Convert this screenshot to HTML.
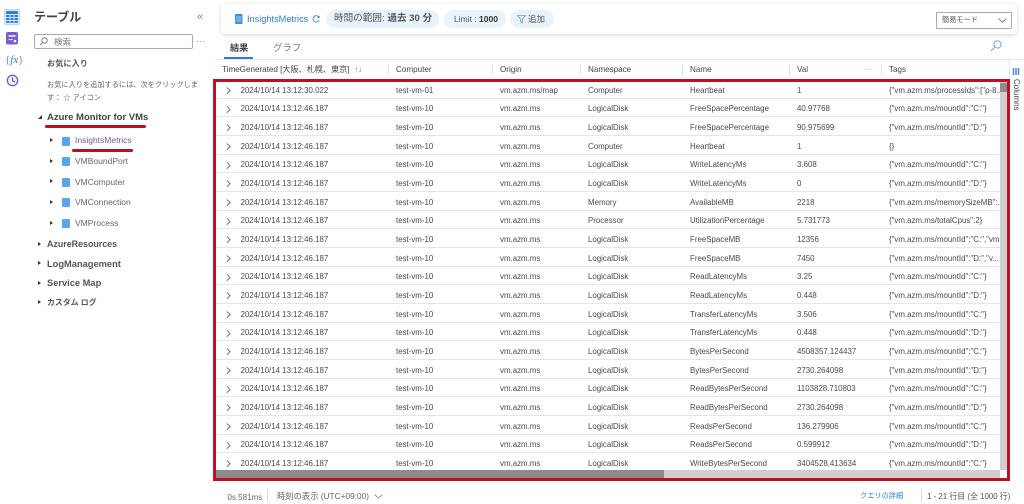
<!DOCTYPE html>
<html lang="ja"><head><meta charset="utf-8"><style>
html,body{margin:0;padding:0;background:#fff}
body{width:1024px;height:504px;position:relative;overflow:hidden;font-family:"Liberation Sans","Noto Sans CJK JP",sans-serif;font-size:8.5px;color:#444}
.a{position:absolute;white-space:nowrap}
svg{position:absolute;overflow:visible}
.row{position:absolute;left:216px;width:784px;height:18.67px;border-bottom:1px solid #e6e6e6;box-sizing:border-box;font-size:7.9px}
.row span{position:absolute;top:4.6px;white-space:nowrap;line-height:12px;color:#4a4a4a}
.row i{position:absolute;left:8.5px;top:8px;width:3.5px;height:3.5px;border-top:1px solid #777;border-right:1px solid #777;transform:rotate(45deg)}
.t0{left:24.5px}.t1{left:180px}.t2{left:284px}.t3{left:372px}.t4{left:474px}.t5{left:581px}.t6{left:673px;width:111px;overflow:hidden}
.h{top:64px;line-height:12px;color:#444;font-size:8.1px}
.sep{position:absolute;top:64px;width:1px;height:11px;background:#e3e3e3}
.item{color:#666;font-size:8.5px}
.bold{font-weight:bold;color:#444;font-size:9.5px}
.tri{position:absolute;width:0;height:0;border-left:3px solid #333;border-top:2.5px solid transparent;border-bottom:2.5px solid transparent}
.ti{position:absolute;left:62px;width:8px;height:9px;background:#5ba6ea;border-radius:1px}
.pill{position:absolute;top:10px;height:18px;background:#e9f3fb;border-radius:9px;line-height:18px;white-space:nowrap;color:#555}
</style></head><body>

<!-- left rail -->
<div class="a" style="left:4px;top:9px;width:16px;height:16px;background:#dcecf9;border:1px solid #b9d8f2;border-radius:2px;box-sizing:border-box"></div>
<svg style="left:6px;top:11px" width="12" height="12"><rect width="12" height="12" rx="1" fill="#2f80cf"/><path d="M0 3.5H12M0 6.5H12M0 9.5H12M4 3.5V12M8 3.5V12" stroke="#d8e9f8" stroke-width=".9"/></svg>
<svg style="left:6px;top:32px" width="12" height="13"><rect width="12" height="12.5" rx="2" fill="#7a5bd0"/><path d="M2.5 4H9.5" stroke="#fff" stroke-width="1.4"/><path d="M2.5 7.5H7" stroke="#d9cff4" stroke-width="1.2"/><circle cx="9" cy="9" r="1.3" fill="#fff"/></svg>
<div class="a" style="left:5px;top:53px;font-size:11px;color:#888;font-family:'Liberation Serif',serif;line-height:14px">{<span style="color:#2d7fc5;font-style:italic">fx</span>}</div>
<svg style="left:6px;top:74px" width="13" height="13" viewBox="0 0 13 13"><circle cx="6.5" cy="6.5" r="5.2" fill="#f1ecfb" stroke="#7a5bd0" stroke-width="1.3"/><path d="M6.5 3.5V6.8L9 8" fill="none" stroke="#555" stroke-width="1"/></svg>

<!-- sidebar -->
<div class="a" style="left:34px;top:7px;font-size:12px;font-weight:bold;color:#444;line-height:20px">テーブル</div>
<div class="a" style="left:197px;top:11px;font-size:11px;color:#5b8fd0;line-height:12px">«</div>
<div class="a" style="left:34px;top:34px;width:159px;height:15px;border:1px solid #aaa;border-radius:2px;box-sizing:border-box"></div>
<svg style="left:39px;top:37px" width="9" height="9"><circle cx="5.5" cy="3.5" r="2.7" fill="none" stroke="#666" stroke-width=".8"/><path d="M3.5 5.5L.8 8.2" stroke="#666" stroke-width=".8"/></svg>
<div class="a" style="left:54px;top:36px;color:#777;line-height:12px">検索</div>
<div class="a" style="left:196px;top:35px;color:#777;line-height:12px;letter-spacing:.5px">···</div>
<div class="a" style="left:47px;top:58px;font-weight:bold;color:#555;line-height:12px;font-size:8.2px">お気に入り</div>
<div class="a" style="left:47px;top:77.5px;color:#666;line-height:13px;font-size:7.2px">お気に入りを追加するには、次をクリックしま<br>す： ☆ アイコン</div>
<div class="a" style="left:38px;top:115px;width:0;height:0;border-bottom:4px solid #333;border-left:4px solid transparent"></div>
<div class="a bold" style="left:47px;top:111px;line-height:13px">Azure Monitor for VMs</div>
<div class="a" style="left:45px;top:125px;width:101px;height:2.5px;background:#b8101f;border-radius:2px"></div>

<div class="tri" style="left:50px;top:138px"></div><div class="ti" style="top:136.5px"></div><div class="a item" style="left:75px;top:134px;line-height:13px;color:#7a5a86">InsightsMetrics</div>
<div class="a" style="left:72px;top:149px;width:61px;height:2.5px;background:#b8101f;border-radius:2px"></div>
<div class="tri" style="left:50px;top:159px"></div><div class="ti" style="top:157px"></div><div class="a item" style="left:75px;top:155px;line-height:13px">VMBoundPort</div>
<div class="tri" style="left:50px;top:179px"></div><div class="ti" style="top:177.5px"></div><div class="a item" style="left:75px;top:175.5px;line-height:13px">VMComputer</div>
<div class="tri" style="left:50px;top:200px"></div><div class="ti" style="top:198px"></div><div class="a item" style="left:75px;top:196px;line-height:13px">VMConnection</div>
<div class="tri" style="left:50px;top:221px"></div><div class="ti" style="top:219px"></div><div class="a item" style="left:75px;top:217px;line-height:13px">VMProcess</div>

<div class="tri" style="left:38px;top:242px"></div><div class="a bold" style="left:47px;top:238px;line-height:13px;color:#555;font-size:8.9px">AzureResources</div>
<div class="tri" style="left:38px;top:261px"></div><div class="a bold" style="left:47px;top:257.5px;line-height:13px;color:#555;font-size:9.3px">LogManagement</div>
<div class="tri" style="left:38px;top:281px"></div><div class="a bold" style="left:47px;top:277px;line-height:13px;color:#555;font-size:9.3px">Service Map</div>
<div class="tri" style="left:38px;top:300px"></div><div class="a bold" style="left:47px;top:296px;line-height:13px;color:#555;font-size:7.9px">カスタム ログ</div>

<!-- top bar -->
<div class="a" style="left:221px;top:4px;width:796px;height:30px;background:#fff;border-radius:4px;box-shadow:0 1px 5px rgba(0,0,0,.16)"></div>
<svg style="left:235px;top:14px" width="8" height="10"><rect width="7.5" height="10" rx="1" fill="#3d8fdc"/><path d="M1 3H6.5M1 5H6.5M1 7H6.5" stroke="#cfe4f7" stroke-width=".7"/></svg>
<div class="a" style="left:247px;top:13px;color:#2f7fc9;line-height:13px;font-size:9.2px">InsightsMetrics</div>
<svg style="left:312px;top:15px" width="8" height="8"><path d="M6.8 2A3.2 3.2 0 1 0 7.2 5" fill="none" stroke="#2f7fc9" stroke-width=".8"/><path d="M7.5 .5V3H5" fill="#2f7fc9"/></svg>
<div class="pill" style="left:326px;width:113px;padding-left:8px;box-sizing:border-box;font-size:9.6px">時間の範囲: <b>過去 30 分</b></div>
<div class="pill" style="left:444px;width:62px;padding-left:10px;box-sizing:border-box">Limit : <b style="color:#333">1000</b></div>
<div class="pill" style="left:510px;width:44px;padding-left:18px;box-sizing:border-box">追加</div>
<svg style="left:517px;top:15px" width="9" height="9"><path d="M.5 .5H8.5L5.3 4.2V8L3.7 7V4.2Z" fill="none" stroke="#6a9ed2" stroke-width=".8"/></svg>
<div class="a" style="left:936px;top:11.5px;width:76px;height:17px;border:1px solid #aaa;border-radius:1px;box-sizing:border-box"></div>
<div class="a" style="left:942px;top:14px;line-height:12px;color:#555;font-size:7.2px">簡易モード</div>
<svg style="left:998px;top:18px" width="9" height="5"><path d="M.5 .5L4.5 4.2L8.5 .5" fill="none" stroke="#666" stroke-width=".8"/></svg>

<!-- tabs -->
<div class="a" style="left:230px;top:40.5px;font-size:9.2px;font-weight:bold;color:#444;line-height:14px">結果</div>
<div class="a" style="left:273px;top:40.5px;font-size:9.4px;color:#777;line-height:14px">グラフ</div>
<div class="a" style="left:224px;top:56.5px;width:29px;height:2px;background:#2f80cf"></div>
<svg style="left:990px;top:40px" width="12" height="12"><circle cx="7.5" cy="4.5" r="3.6" fill="none" stroke="#6aa5e0" stroke-width="1"/><path d="M5 7L1 11" stroke="#6aa5e0" stroke-width="1"/></svg>
<div class="a" style="left:215px;top:58.5px;width:809px;height:1px;background:#e6e6e6"></div>

<!-- header -->
<div class="a h" style="left:222px">TimeGenerated [大阪、札幌、東京]&nbsp; <span style="color:#777">↑↓</span></div>
<div class="a h" style="left:396px">Computer</div>
<div class="a h" style="left:500px">Origin</div>
<div class="a h" style="left:588px">Namespace</div>
<div class="a h" style="left:690px">Name</div>
<div class="a h" style="left:797px">Val</div>
<div class="a h" style="left:864px;color:#8aa8c8">···</div>
<div class="a h" style="left:889px">Tags</div>
<div class="sep" style="left:388px"></div><div class="sep" style="left:492px"></div><div class="sep" style="left:580px"></div><div class="sep" style="left:682px"></div><div class="sep" style="left:789px"></div><div class="sep" style="left:881px"></div>
<div class="a" style="left:1009px;top:58px;width:1px;height:422px;background:#e6e6e6"></div>

<!-- rows -->
<div class="row" style="top:80px"><i></i><span class="t0">2024/10/14 13:12:30.022</span><span class="t1">test-vm-01</span><span class="t2">vm.azm.ms/map</span><span class="t3">Computer</span><span class="t4">Heartbeat</span><span class="t5">1</span><span class="t6">{"vm.azm.ms/processIds":["p-8...</span></div>
<div class="row" style="top:98.67px"><i></i><span class="t0">2024/10/14 13:12:46.187</span><span class="t1">test-vm-10</span><span class="t2">vm.azm.ms</span><span class="t3">LogicalDisk</span><span class="t4">FreeSpacePercentage</span><span class="t5">40.97768</span><span class="t6">{"vm.azm.ms/mountId":"C:"}</span></div>
<div class="row" style="top:117.33px"><i></i><span class="t0">2024/10/14 13:12:46.187</span><span class="t1">test-vm-10</span><span class="t2">vm.azm.ms</span><span class="t3">LogicalDisk</span><span class="t4">FreeSpacePercentage</span><span class="t5">90.975699</span><span class="t6">{"vm.azm.ms/mountId":"D:"}</span></div>
<div class="row" style="top:136px"><i></i><span class="t0">2024/10/14 13:12:46.187</span><span class="t1">test-vm-10</span><span class="t2">vm.azm.ms</span><span class="t3">Computer</span><span class="t4">Heartbeat</span><span class="t5">1</span><span class="t6">{}</span></div>
<div class="row" style="top:154.67px"><i></i><span class="t0">2024/10/14 13:12:46.187</span><span class="t1">test-vm-10</span><span class="t2">vm.azm.ms</span><span class="t3">LogicalDisk</span><span class="t4">WriteLatencyMs</span><span class="t5">3.608</span><span class="t6">{"vm.azm.ms/mountId":"C:"}</span></div>
<div class="row" style="top:173.33px"><i></i><span class="t0">2024/10/14 13:12:46.187</span><span class="t1">test-vm-10</span><span class="t2">vm.azm.ms</span><span class="t3">LogicalDisk</span><span class="t4">WriteLatencyMs</span><span class="t5">0</span><span class="t6">{"vm.azm.ms/mountId":"D:"}</span></div>
<div class="row" style="top:192px"><i></i><span class="t0">2024/10/14 13:12:46.187</span><span class="t1">test-vm-10</span><span class="t2">vm.azm.ms</span><span class="t3">Memory</span><span class="t4">AvailableMB</span><span class="t5">2218</span><span class="t6">{"vm.azm.ms/memorySizeMB":...</span></div>
<div class="row" style="top:210.67px"><i></i><span class="t0">2024/10/14 13:12:46.187</span><span class="t1">test-vm-10</span><span class="t2">vm.azm.ms</span><span class="t3">Processor</span><span class="t4">UtilizationPercentage</span><span class="t5">5.731773</span><span class="t6">{"vm.azm.ms/totalCpus":2}</span></div>
<div class="row" style="top:229.33px"><i></i><span class="t0">2024/10/14 13:12:46.187</span><span class="t1">test-vm-10</span><span class="t2">vm.azm.ms</span><span class="t3">LogicalDisk</span><span class="t4">FreeSpaceMB</span><span class="t5">12356</span><span class="t6">{"vm.azm.ms/mountId":"C:","vm...</span></div>
<div class="row" style="top:248px"><i></i><span class="t0">2024/10/14 13:12:46.187</span><span class="t1">test-vm-10</span><span class="t2">vm.azm.ms</span><span class="t3">LogicalDisk</span><span class="t4">FreeSpaceMB</span><span class="t5">7450</span><span class="t6">{"vm.azm.ms/mountId":"D:","v...</span></div>
<div class="row" style="top:266.67px"><i></i><span class="t0">2024/10/14 13:12:46.187</span><span class="t1">test-vm-10</span><span class="t2">vm.azm.ms</span><span class="t3">LogicalDisk</span><span class="t4">ReadLatencyMs</span><span class="t5">3.25</span><span class="t6">{"vm.azm.ms/mountId":"C:"}</span></div>
<div class="row" style="top:285.33px"><i></i><span class="t0">2024/10/14 13:12:46.187</span><span class="t1">test-vm-10</span><span class="t2">vm.azm.ms</span><span class="t3">LogicalDisk</span><span class="t4">ReadLatencyMs</span><span class="t5">0.448</span><span class="t6">{"vm.azm.ms/mountId":"D:"}</span></div>
<div class="row" style="top:304px"><i></i><span class="t0">2024/10/14 13:12:46.187</span><span class="t1">test-vm-10</span><span class="t2">vm.azm.ms</span><span class="t3">LogicalDisk</span><span class="t4">TransferLatencyMs</span><span class="t5">3.506</span><span class="t6">{"vm.azm.ms/mountId":"C:"}</span></div>
<div class="row" style="top:322.67px"><i></i><span class="t0">2024/10/14 13:12:46.187</span><span class="t1">test-vm-10</span><span class="t2">vm.azm.ms</span><span class="t3">LogicalDisk</span><span class="t4">TransferLatencyMs</span><span class="t5">0.448</span><span class="t6">{"vm.azm.ms/mountId":"D:"}</span></div>
<div class="row" style="top:341.33px"><i></i><span class="t0">2024/10/14 13:12:46.187</span><span class="t1">test-vm-10</span><span class="t2">vm.azm.ms</span><span class="t3">LogicalDisk</span><span class="t4">BytesPerSecond</span><span class="t5">4508357.124437</span><span class="t6">{"vm.azm.ms/mountId":"C:"}</span></div>
<div class="row" style="top:360px"><i></i><span class="t0">2024/10/14 13:12:46.187</span><span class="t1">test-vm-10</span><span class="t2">vm.azm.ms</span><span class="t3">LogicalDisk</span><span class="t4">BytesPerSecond</span><span class="t5">2730.264098</span><span class="t6">{"vm.azm.ms/mountId":"D:"}</span></div>
<div class="row" style="top:378.67px"><i></i><span class="t0">2024/10/14 13:12:46.187</span><span class="t1">test-vm-10</span><span class="t2">vm.azm.ms</span><span class="t3">LogicalDisk</span><span class="t4">ReadBytesPerSecond</span><span class="t5">1103828.710803</span><span class="t6">{"vm.azm.ms/mountId":"C:"}</span></div>
<div class="row" style="top:397.33px"><i></i><span class="t0">2024/10/14 13:12:46.187</span><span class="t1">test-vm-10</span><span class="t2">vm.azm.ms</span><span class="t3">LogicalDisk</span><span class="t4">ReadBytesPerSecond</span><span class="t5">2730.264098</span><span class="t6">{"vm.azm.ms/mountId":"D:"}</span></div>
<div class="row" style="top:416px"><i></i><span class="t0">2024/10/14 13:12:46.187</span><span class="t1">test-vm-10</span><span class="t2">vm.azm.ms</span><span class="t3">LogicalDisk</span><span class="t4">ReadsPerSecond</span><span class="t5">136.279906</span><span class="t6">{"vm.azm.ms/mountId":"C:"}</span></div>
<div class="row" style="top:434.67px"><i></i><span class="t0">2024/10/14 13:12:46.187</span><span class="t1">test-vm-10</span><span class="t2">vm.azm.ms</span><span class="t3">LogicalDisk</span><span class="t4">ReadsPerSecond</span><span class="t5">0.599912</span><span class="t6">{"vm.azm.ms/mountId":"D:"}</span></div>
<div class="row" style="top:453.33px;border-bottom:0"><i></i><span class="t0">2024/10/14 13:12:46.187</span><span class="t1">test-vm-10</span><span class="t2">vm.azm.ms</span><span class="t3">LogicalDisk</span><span class="t4">WriteBytesPerSecond</span><span class="t5">3404528.413634</span><span class="t6">{"vm.azm.ms/mountId":"C:"}</span></div>

<!-- scrollbars -->
<div class="a" style="left:1000px;top:81px;width:7px;height:389px;background:#cfcfcf"></div>
<div class="a" style="left:1000px;top:83px;width:7px;height:9px;background:#8c8c8c"></div>
<div class="a" style="left:216px;top:470px;width:784px;height:8px;background:#cfcfcf"></div>
<div class="a" style="left:216px;top:470px;width:448px;height:8px;background:#8c8c8c"></div>

<!-- red frame -->
<div class="a" style="left:213px;top:79px;width:797px;height:402px;border:3px solid #c00f20;box-sizing:border-box"></div>

<!-- columns side -->
<svg style="left:1013px;top:68px" width="8" height="7"><path d="M.5 0V7M3 0V7M5.5 0V7" stroke="#5b8fd0" stroke-width="1.6"/></svg>
<div class="a" style="left:1011px;top:79px;font-size:8px;color:#444;writing-mode:vertical-rl;line-height:10px">Columns</div>

<!-- footer -->
<div class="a" style="left:227.5px;top:491.5px;line-height:11px;font-size:8px;color:#666">0s 581ms</div>
<div class="a" style="left:267px;top:489px;width:1px;height:13px;background:#ddd"></div>
<div class="a" style="left:277px;top:490px;line-height:12px;color:#666;font-size:8.3px">時刻の表示 (UTC+09:00)</div>
<svg style="left:374px;top:494px" width="9" height="5"><path d="M.5 .5L4.5 4L8.5 .5" fill="none" stroke="#777" stroke-width=".7"/></svg>
<div class="a" style="left:860px;top:490px;line-height:12px;color:#3c84cc;font-size:7.2px">クエリの詳細</div>
<div class="a" style="left:920.5px;top:488px;width:1px;height:14px;background:#ddd"></div>
<div class="a" style="left:927px;top:491px;line-height:12px;color:#555;font-size:7.9px">1 - 21 行目 (全 1000 行)</div>
</body></html>
